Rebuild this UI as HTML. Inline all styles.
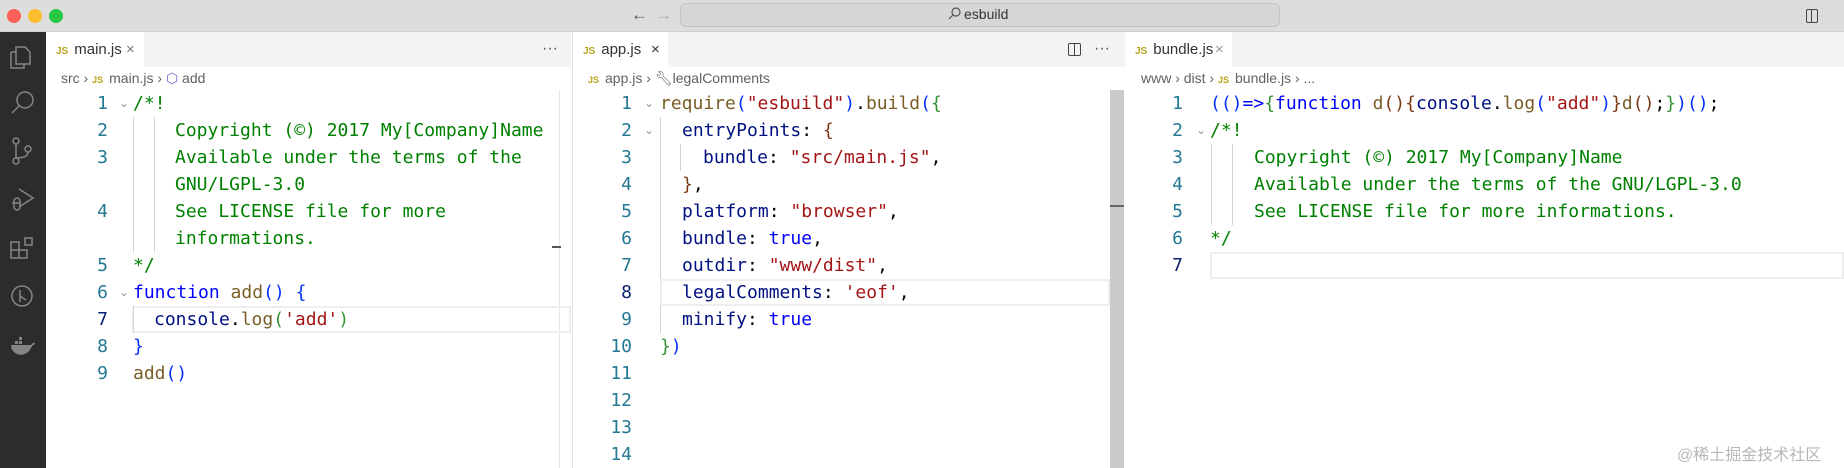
<!DOCTYPE html>
<html><head><meta charset="utf-8"><style>
*{margin:0;padding:0;box-sizing:border-box}
body{width:1844px;height:468px;overflow:hidden;background:#fff;font-family:"Liberation Sans",sans-serif;position:relative}
.a{position:absolute}
.title{left:0;top:0;width:1844px;height:32px;background:#dddddd;border-bottom:1px solid #cfcfcf}
.dot{width:14px;height:14px;border-radius:50%;top:9px}
.act{left:0;top:32px;width:46px;height:436px;background:#2c2c2c}
.tabbar{top:32px;height:35px;background:#f3f3f3}
.tab{top:32px;height:35px;background:#fff;font-size:15px;color:#333;line-height:35px}
.js{color:#b7a319;font-weight:bold;font-size:10px;margin-right:6px}
.bc{font-size:14px;color:#616161;top:68px;line-height:20px;white-space:nowrap}
.code{font-family:"DejaVu Sans Mono","Liberation Mono",monospace;font-size:18px;white-space:pre;line-height:27px;height:27px}
.ln{color:#237893;text-align:right;width:30px}
.ln.cur{color:#0b216f}
.c{color:#008000}.k{color:#0000ff}.f{color:#795e26}.s{color:#a31515}.p{color:#001080}.b1{color:#0431fa}.b2{color:#319331}.b3{color:#7b3814}.t{color:#000}
.chev{color:#999;font-size:12px;font-family:"DejaVu Sans",sans-serif}
.guide{width:1px;background:#d3d3d3}
.hl{border:2px solid #eeeeee;height:27px}
</style></head><body>
<div class="a title"></div>
<div class="a dot" style="left:7px;background:#fe5f57"></div>
<div class="a dot" style="left:28px;background:#febc2e"></div>
<div class="a dot" style="left:49px;background:#28c840"></div>
<div class="a" style="left:631px;top:5px;font-size:17px;color:#555">←</div>
<div class="a" style="left:655px;top:5px;font-size:17px;color:#aaa">→</div>
<div class="a" style="left:680px;top:3px;width:600px;height:24px;border:1px solid #c4c4c4;border-radius:6px;background:#d6d6d6"></div>
<div class="a" style="left:948px;top:6px;font-size:14px;color:#333"><svg width="13" height="13" viewBox="0 0 13 13" style="vertical-align:-1px;margin-right:3px"><circle cx="8" cy="5" r="4" fill="none" stroke="#555" stroke-width="1.2"/><line x1="5" y1="8" x2="1" y2="12" stroke="#555" stroke-width="1.2"/></svg>esbuild</div>
<div class="a" style="left:1806px;top:9px;width:12px;height:14px;border:1.3px solid #444;border-radius:2px"></div>
<div class="a" style="left:1811px;top:9px;width:1.3px;height:14px;background:#444"></div>

<div class="a act"></div>
<svg class="a" style="left:0;top:32px" width="46" height="340" viewBox="0 32 46 340" fill="none" stroke="#858585" stroke-width="1.5">
<path d="M16 47h9l5 5v12h-14z M11 52h5 M11 52v16h13v-4"/>
<circle cx="25" cy="100" r="8"/><path d="M19 106l-7 7"/>
<circle cx="16" cy="141" r="3"/><circle cx="16" cy="161" r="3"/><circle cx="28" cy="149" r="3"/><path d="M16 144v14 M28 152c0 5-6 6-12 6"/>
<path d="M19 189l14 9-14 9 M12 203h8 M14 201a3 3 0 0 1 6 0v6a3 3 0 0 1-6 0z"/>
<path d="M11 242h8v8h-8z M11 250h8v8h-8z M19 250h8v8h-8z M25 238h7v7h-7z"/>
<circle cx="22" cy="296" r="10"/><path d="M20 290v12 M20 296l6 4"/>
</svg>
<svg class="a" style="left:10px;top:337px" width="26" height="20" viewBox="0 0 26 20"><path d="M1 8h20c2-3 4-3 4-1-2 1-3 2-4 4-3 6-9 8-14 6C3 15 1 12 1 8z" fill="#858585"/><rect x="5" y="4" width="3" height="3" fill="#858585"/><rect x="9" y="4" width="3" height="3" fill="#858585"/><rect x="9" y="0" width="3" height="3" fill="#858585"/></svg>

<!-- Panel 1 -->
<div class="a tabbar" style="left:46px;width:525px"></div>
<div class="a tab" style="left:46px;width:98px;padding-left:10px"><span class="js">JS</span>main.js<span style="position:absolute;left:80px;color:#777">×</span></div>
<div class="a" style="left:542px;top:40px;font-size:16px;color:#555">···</div>
<div class="a bc" style="left:61px"><span>src</span> › <span class="js" style="font-size:9px">JS</span>main.js › <span style="color:#7a5cc5">⬡</span> add</div>
<div class="a guide" style="left:559px;top:90px;height:378px;background:#e5e5e5"></div>
<div class="a" style="left:552px;top:246px;width:9px;height:2px;background:#555"></div>
<div class="a guide" style="left:133px;top:117px;height:135px"></div>
<div class="a guide" style="left:154px;top:117px;height:135px"></div>
<div class="a hl" style="left:132px;top:306px;width:439px"></div>
<div class="a guide" style="left:133px;top:306px;height:27px"></div>
<div style="position:absolute;left:78px;top:90px">
<div class="code"><span class="a ln" style="left:0">1</span><span class="a chev" style="left:41px;top:0">⌄</span><span class="a c" style="left:55px">/*!</span></div>
<div class="code"><span class="a ln" style="left:0">2</span><span class="a c" style="left:97px">Copyright (©) 2017 My[Company]Name</span></div>
<div class="code"><span class="a ln" style="left:0">3</span><span class="a c" style="left:97px">Available under the terms of the</span></div>
<div class="code"><span class="a c" style="left:97px">GNU/LGPL-3.0</span></div>
<div class="code"><span class="a ln" style="left:0">4</span><span class="a c" style="left:97px">See LICENSE file for more</span></div>
<div class="code"><span class="a c" style="left:97px">informations.</span></div>
<div class="code"><span class="a ln" style="left:0">5</span><span class="a c" style="left:55px">*/</span></div>
<div class="code"><span class="a ln" style="left:0">6</span><span class="a chev" style="left:41px">⌄</span><span class="a" style="left:55px"><span class="k">function</span> <span class="f">add</span><span class="b1">()</span> <span class="b1">{</span></span></div>
<div class="code"><span class="a ln cur" style="left:0">7</span><span class="a" style="left:76px"><span class="p">console</span>.<span class="f">log</span><span class="b2">(</span><span class="s">'add'</span><span class="b2">)</span></span></div>
<div class="code"><span class="a ln" style="left:0">8</span><span class="a b1" style="left:55px">}</span></div>
<div class="code"><span class="a ln" style="left:0">9</span><span class="a" style="left:55px"><span class="f">add</span><span class="b1">()</span></span></div>
</div>

<!-- Panel 2 -->
<div class="a" style="left:572px;top:32px;width:1px;height:436px;background:#e5e5e5"></div>
<div class="a tabbar" style="left:573px;width:551px"></div>
<div class="a tab" style="left:573px;width:95px;padding-left:10px"><span class="js">JS</span>app.js<span style="position:absolute;left:78px;color:#333">×</span></div>
<div class="a" style="left:1068px;top:43px;width:13px;height:13px;border:1.3px solid #444;border-radius:2px"></div>
<div class="a" style="left:1074px;top:43px;width:1.3px;height:13px;background:#444"></div>
<div class="a" style="left:1094px;top:40px;font-size:16px;color:#555">···</div>
<div class="a bc" style="left:588px"><span class="js" style="font-size:9px">JS</span>app.js › <span style="color:#666">🔧︎</span>legalComments</div>
<div class="a" style="left:1110px;top:90px;width:14px;height:378px;background:#cbcbcb"></div>
<div class="a" style="left:1110px;top:205px;width:14px;height:2px;background:#666"></div>
<div class="a guide" style="left:660px;top:117px;height:216px"></div>
<div class="a guide" style="left:680px;top:144px;height:27px"></div>
<div class="a hl" style="left:660px;top:279px;width:450px"></div>
<div style="position:absolute;left:602px;top:90px">
<div class="code"><span class="a ln" style="left:0">1</span><span class="a chev" style="left:42px">⌄</span><span class="a" style="left:58px"><span class="f">require</span><span class="b1">(</span><span class="s">"esbuild"</span><span class="b1">)</span>.<span class="f">build</span><span class="b1">(</span><span class="b2">{</span></span></div>
<div class="code"><span class="a ln" style="left:0">2</span><span class="a chev" style="left:42px">⌄</span><span class="a" style="left:80px"><span class="p">entryPoints</span>: <span class="b3">{</span></span></div>
<div class="code"><span class="a ln" style="left:0">3</span><span class="a" style="left:101px"><span class="p">bundle</span>: <span class="s">"src/main.js"</span>,</span></div>
<div class="code"><span class="a ln" style="left:0">4</span><span class="a" style="left:80px"><span class="b3">}</span>,</span></div>
<div class="code"><span class="a ln" style="left:0">5</span><span class="a" style="left:80px"><span class="p">platform</span>: <span class="s">"browser"</span>,</span></div>
<div class="code"><span class="a ln" style="left:0">6</span><span class="a" style="left:80px"><span class="p">bundle</span>: <span class="k">true</span>,</span></div>
<div class="code"><span class="a ln" style="left:0">7</span><span class="a" style="left:80px"><span class="p">outdir</span>: <span class="s">"www/dist"</span>,</span></div>
<div class="code"><span class="a ln cur" style="left:0">8</span><span class="a" style="left:80px"><span class="p">legalComments</span>: <span class="s">'eof'</span>,</span></div>
<div class="code"><span class="a ln" style="left:0">9</span><span class="a" style="left:80px"><span class="p">minify</span>: <span class="k">true</span></span></div>
<div class="code"><span class="a ln" style="left:0">10</span><span class="a" style="left:58px"><span class="b2">}</span><span class="b1">)</span></span></div>
<div class="code"><span class="a ln" style="left:0">11</span></div>
<div class="code"><span class="a ln" style="left:0">12</span></div>
<div class="code"><span class="a ln" style="left:0">13</span></div>
<div class="code"><span class="a ln" style="left:0">14</span></div>
</div>

<!-- Panel 3 -->
<div class="a tabbar" style="left:1124px;width:720px"></div>
<div class="a tab" style="left:1125px;width:107px;padding-left:10px"><span class="js">JS</span>bundle.js<span style="position:absolute;left:90px;color:#999">×</span></div>
<div class="a bc" style="left:1141px">www › dist › <span class="js" style="font-size:9px">JS</span>bundle.js › ...</div>
<div class="a guide" style="left:1211px;top:144px;height:81px"></div>
<div class="a guide" style="left:1232px;top:144px;height:81px"></div>
<div class="a hl" style="left:1210px;top:252px;width:634px"></div>
<div style="position:absolute;left:1153px;top:90px">
<div class="code"><span class="a ln" style="left:0">1</span><span class="a" style="left:57px"><span class="b1">(()</span><span class="k">=&gt;</span><span class="b2">{</span><span class="k">function</span> <span class="f">d</span><span class="b3">()</span><span class="b3">{</span><span class="p">console</span>.<span class="f">log</span><span class="b1">(</span><span class="s">"add"</span><span class="b1">)</span><span class="b3">}</span><span class="f">d</span><span class="b3">()</span>;<span class="b2">}</span><span class="b1">)()</span>;</span></div>
<div class="code"><span class="a ln" style="left:0">2</span><span class="a chev" style="left:43px">⌄</span><span class="a c" style="left:57px">/*!</span></div>
<div class="code"><span class="a ln" style="left:0">3</span><span class="a c" style="left:101px">Copyright (©) 2017 My[Company]Name</span></div>
<div class="code"><span class="a ln" style="left:0">4</span><span class="a c" style="left:101px">Available under the terms of the GNU/LGPL-3.0</span></div>
<div class="code"><span class="a ln" style="left:0">5</span><span class="a c" style="left:101px">See LICENSE file for more informations.</span></div>
<div class="code"><span class="a ln" style="left:0">6</span><span class="a c" style="left:57px">*/</span></div>
<div class="code"><span class="a ln cur" style="left:0">7</span></div>
</div>
<div class="a" style="left:1677px;top:441px;font-size:16px;color:#b8b8b8;font-family:'Liberation Sans','Noto Sans CJK SC',sans-serif">@稀土掘金技术社区</div>
</body></html>
